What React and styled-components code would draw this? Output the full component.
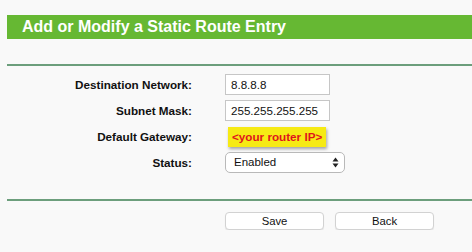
import React from "react";
import styled, { createGlobalStyle } from "styled-components";

const Global = createGlobalStyle`
  html, body { margin: 0; padding: 0; background: #f9f9f9; }
  body { font-family: "Liberation Sans", Arial, sans-serif; }
`;

const Page = styled.div`
  padding: 15px 0 0 7px;
  width: 465px;
`;

const Header = styled.div`
  height: 24px;
  background: #66b833;
  color: #fff;
  font-weight: bold;
  font-size: 16px;
  line-height: 24px;
  padding-left: 15px;
`;

const Rule = styled.div`
  height: 2px;
  background: #6c9e7c;
  margin-top: ${(p) => p.$top}px;
`;

const Form = styled.div`
  display: grid;
  grid-template-columns: 185px 1fr;
  grid-auto-rows: 21px;
  column-gap: 33px;
  row-gap: 5px;
  padding: 8px 0 0;
  align-items: center;
`;

const Label = styled.div`
  text-align: right;
  font-weight: bold;
  font-size: 11.7px;
  color: #111;
  white-space: nowrap;
`;

const Input = styled.div`
  box-sizing: border-box;
  width: 105px;
  height: 21px;
  border: 1px solid #c6c6c6;
  background: #fff;
  font-size: 11.6px;
  line-height: 19px;
  padding-left: 5px;
  color: #111;
  white-space: nowrap;
`;

const Highlight = styled.div`
  box-sizing: border-box;
  margin-left: 3px;
  width: 98px;
  height: 20px;
  background: #f6ea14;
  box-shadow: 1px 2px 3px rgba(0,0,0,0.35);
  color: #e0141c;
  font-weight: bold;
  font-size: 11.7px;
  line-height: 20px;
  padding-left: 4px;
  white-space: nowrap;
`;

const Select = styled.div`
  box-sizing: border-box;
  width: 120px;
  height: 21px;
  border: 1px solid #b9b9b9;
  border-radius: 5px;
  background: #fff;
  font-size: 11.5px;
  line-height: 19px;
  padding: 0 5px 0 8px;
  color: #111;
  display: flex;
  justify-content: space-between;
  align-items: center;
`;

const Buttons = styled.div`
  display: flex;
  gap: 11px;
  padding: 11px 0 0 218px;
`;

const Button = styled.div`
  box-sizing: border-box;
  width: 99px;
  height: 18px;
  border: 1px solid #d2d2d2;
  border-radius: 4px;
  background: #fff;
  box-shadow: 0 1px 1px rgba(0,0,0,0.08);
  font-size: 11.3px;
  line-height: 16px;
  text-align: center;
  color: #111;
`;

const Arrows = () => (
  <svg width="7" height="11" viewBox="0 0 7 11">
    <path d="M3.5 0.5 L6.5 4.5 L0.5 4.5 Z" fill="#222" />
    <path d="M3.5 10.5 L6.5 6.5 L0.5 6.5 Z" fill="#222" />
  </svg>
);

export default function App() {
  return (
    <>
      <Global />
      <Page>
        <Header>Add or Modify a Static Route Entry</Header>
        <Rule $top={25} />
        <Form>
          <Label>Destination Network:</Label>
          <Input>8.8.8.8</Input>
          <Label>Subnet Mask:</Label>
          <Input>255.255.255.255</Input>
          <Label>Default Gateway:</Label>
          <Highlight>&lt;your router IP&gt;</Highlight>
          <Label>Status:</Label>
          <Select>
            <span>Enabled</span>
            <Arrows />
          </Select>
        </Form>
        <Rule $top={26} />
        <Buttons>
          <Button>Save</Button>
          <Button>Back</Button>
        </Buttons>
      </Page>
    </>
  );
}
